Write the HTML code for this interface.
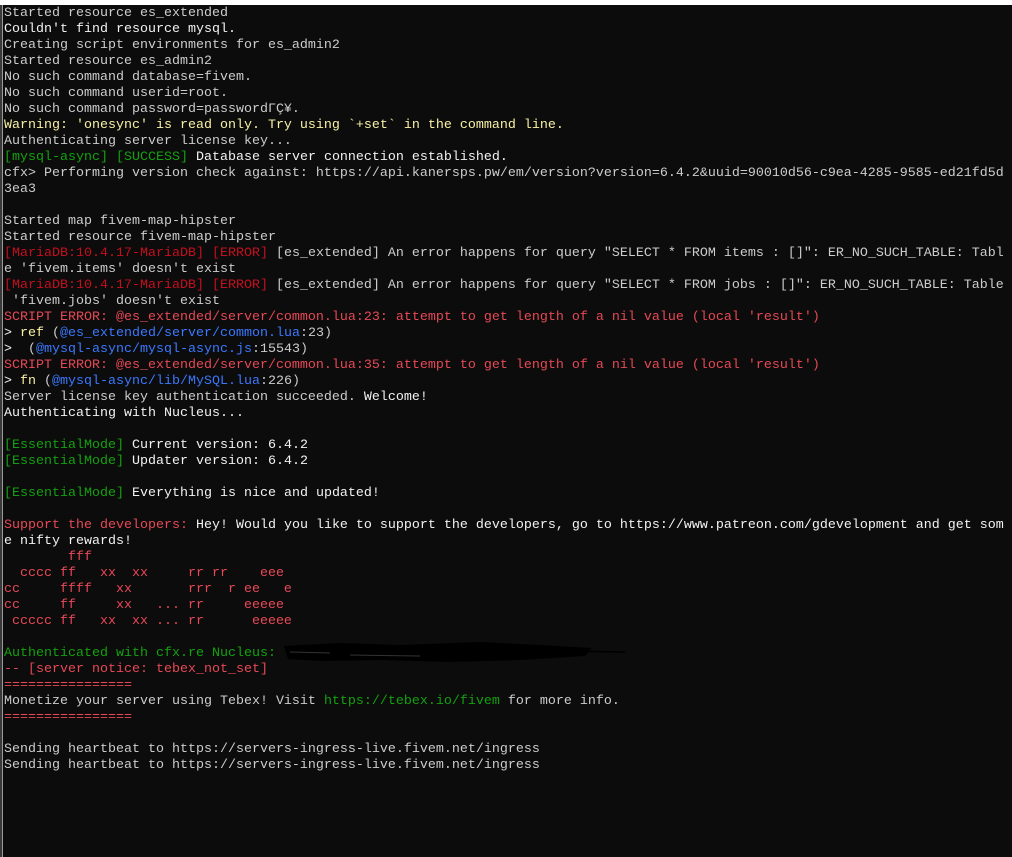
<!DOCTYPE html>
<html><head><meta charset="utf-8"><style>
html,body{margin:0;padding:0;width:1012px;height:857px;overflow:hidden;background:#0c0c0c}
.top{position:absolute;left:0;top:0;width:1012px;height:5px;background:#fff}
.lb{position:absolute;left:0;top:5px;width:2px;height:852px;background:#3a3a3a}
.lb2{position:absolute;left:2px;top:5px;width:1px;height:852px;background:#9a9a9a}
pre{position:absolute;left:4px;top:6px;margin:0;font-family:"Liberation Mono",monospace;font-size:13.33px;line-height:16px;color:#cccccc;white-space:pre}
.w{color:#f2f2f2}.g{color:#13a10e}.r{color:#e74856}.d{color:#c50f1f}.b{color:#3b78ff}.y{color:#f9f1a5}
svg{position:absolute;left:0;top:0}
</style></head><body>
<div class="top"></div><div class="lb"></div><div class="lb2"></div>
<pre>Started resource es_extended
<span class="w">Couldn't find resource mysql.</span>
Creating script environments for es_admin2
Started resource es_admin2
No such command database=fivem.
No such command userid=root.
No such command password=passwordΓÇ¥.
<span class="y">Warning: 'onesync' is read only. Try using `+set` in the command line.</span>
Authenticating server license key...
<span class="g">[mysql-async] [SUCCESS]</span> <span class="w">Database server connection established.</span>
cfx&gt; Performing version check against: https://api.kanersps.pw/em/version?version=6.4.2&amp;uuid=90010d56-c9ea-4285-9585-ed21fd5d
3ea3

Started map fivem-map-hipster
Started resource fivem-map-hipster
<span class="d">[MariaDB:10.4.17-MariaDB] [ERROR]</span> [es_extended] An error happens for query "SELECT * FROM items : []": ER_NO_SUCH_TABLE: Tabl
e 'fivem.items' doesn't exist
<span class="d">[MariaDB:10.4.17-MariaDB] [ERROR]</span> [es_extended] An error happens for query "SELECT * FROM jobs : []": ER_NO_SUCH_TABLE: Table
 'fivem.jobs' doesn't exist
<span class="r">SCRIPT ERROR: @es_extended/server/common.lua:23: attempt to get length of a nil value (local 'result')</span>
<span class="w">&gt;</span> <span class="y">ref</span> (<span class="b">@es_extended/server/common.lua</span>:23)
<span class="w">&gt;</span>  (<span class="b">@mysql-async/mysql-async.js</span>:15543)
<span class="r">SCRIPT ERROR: @es_extended/server/common.lua:35: attempt to get length of a nil value (local 'result')</span>
<span class="w">&gt;</span> <span class="y">fn</span> (<span class="b">@mysql-async/lib/MySQL.lua</span>:226)
Server license key authentication succeeded. <span class="w">Welcome!</span>
<span class="w">Authenticating with Nucleus...</span>

<span class="g">[EssentialMode]</span> <span class="w">Current version: 6.4.2</span>
<span class="g">[EssentialMode]</span> <span class="w">Updater version: 6.4.2</span>

<span class="g">[EssentialMode]</span> <span class="w">Everything is nice and updated!</span>

<span class="r">Support the developers:</span> <span class="w">Hey! Would you like to support the developers, go to https://www.patreon.com/gdevelopment and get som</span>
<span class="w">e nifty rewards!</span>
<span class="r">        fff
  cccc ff   xx  xx     rr rr    eee
cc     ffff   xx       rrr  r ee   e
cc     ff     xx   ... rr     eeeee
 ccccc ff   xx  xx ... rr      eeeee</span>

<span class="g">Authenticated with cfx.re Nucleus:</span>
<span class="r">-- [server notice: tebex_not_set]</span>
<span class="r">================</span>
Monetize your server using Tebex! Visit <span class="g">https://tebex.io/fivem</span> for more info.
<span class="r">================</span>

Sending heartbeat to https://servers-ingress-live.fivem.net/ingress
Sending heartbeat to https://servers-ingress-live.fivem.net/ingress</pre>
<svg width="1012" height="857"><path d="M284 646 L340 643 L400 645 L480 642 L540 645 L592 648 L585 656 L520 660 L450 662 L380 660 L320 661 L288 659 Z" fill="#000"/><path d="M560 651 L625 652" stroke="#000" stroke-width="1.5" fill="none"/><path d="M290 652 L330 653 M350 655 L420 656" stroke="#333" stroke-width="1" fill="none"/></svg>
</body></html>
